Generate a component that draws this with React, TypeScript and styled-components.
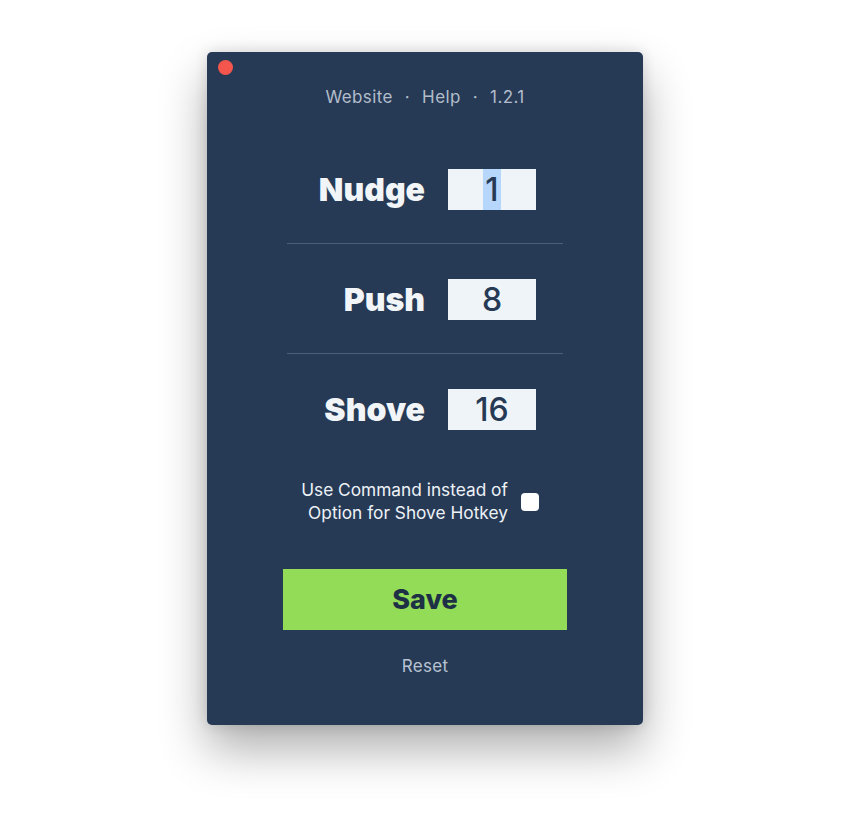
import React from 'react';
import styled, { createGlobalStyle } from 'styled-components';

const GlobalStyle = createGlobalStyle`
  html, body {
    margin: 0;
    padding: 0;
    background: #ffffff;
  }
  body {
    font-family: Inter, "Noto Sans", "Liberation Sans", sans-serif;
    -webkit-font-smoothing: antialiased;
  }
`;

const Page = styled.div`
  width: 849px;
  height: 827px;
  display: flex;
  justify-content: center;
  align-items: flex-start;
  padding-top: 52px;
  box-sizing: border-box;
`;

const Window = styled.div`
  width: 436px;
  height: 673px;
  margin-left: 1px;
  background: #263a56;
  border-radius: 5px;
  box-shadow: 0 24px 48px rgba(0, 0, 0, 0.32), 0 0 14px rgba(0, 0, 0, 0.14);
  display: flex;
  flex-direction: column;
  align-items: center;
`;

const TitleBar = styled.div`
  align-self: stretch;
  height: 30px;
  display: flex;
  align-items: center;
  padding-left: 11px;
`;

const CloseDot = styled.span`
  width: 15px;
  height: 15px;
  border-radius: 50%;
  background: #f4564d;
`;

const Links = styled.nav`
  margin-top: 5px;
  display: flex;
  gap: 12px;
  font-size: 17px;
  line-height: 20px;
  letter-spacing: 0.4px;
  color: #b3bdca;
`;

const LinkItem = styled.span``;

const Form = styled.div`
  margin-top: 62px;
  width: 276px;
  display: flex;
  flex-direction: column;
`;

const Field = styled.div`
  display: grid;
  grid-template-columns: 1fr 1fr;
  align-items: center;
  padding: 35px 0 33px;
  border-bottom: 1px solid #4b5f7a;

  &:first-child {
    padding-top: 0;
  }
  &:last-child {
    padding-bottom: 0;
    border-bottom: none;
  }
`;

const Label = styled.label`
  justify-self: end;
  font-size: 32px;
  line-height: 1;
  font-weight: 900;
  color: #f1f5f8;
`;

const NumberBox = styled.div`
  margin-left: 23px;
  width: 88px;
  height: 41px;
  background: #eef4f7;
  display: flex;
  justify-content: center;
  align-items: stretch;
  font-size: 32px;
  font-weight: 500;
  color: #263a56;
`;

const Value = styled.span<{ $selected?: boolean }>`
  display: flex;
  align-items: center;
  padding: 0 ${(p) => (p.$selected ? '2px' : '0')};
  background: ${(p) => (p.$selected ? '#b6d6fb' : 'transparent')};
`;

const OptionRow = styled.div`
  margin-top: 48px;
  display: flex;
  align-items: center;
  gap: 13px;
  padding-right: 10px;
`;

const OptionText = styled.span`
  text-align: right;
  font-size: 17.3px;
  line-height: 23px;
  color: #eef2f6;
`;

const Check = styled.span`
  width: 18px;
  height: 18px;
  border-radius: 4px;
  background: #ffffff;
  margin-top: 1px;
`;

const SaveButton = styled.button`
  margin-top: 45px;
  width: 284px;
  height: 61px;
  border: none;
  background: #93dc57;
  color: #1e3045;
  font-family: inherit;
  font-size: 27px;
  font-weight: 800;
  cursor: pointer;
`;

const ResetLink = styled.span`
  margin-top: 26px;
  font-size: 17px;
  line-height: 20px;
  letter-spacing: 0.3px;
  color: #b8c3d2;
`;

const fields = [
  { name: 'Nudge', value: '1', selected: true },
  { name: 'Push', value: '8' },
  { name: 'Shove', value: '16' },
];

export default function App() {
  return (
    <>
      <GlobalStyle />
      <Page>
        <Window>
          <TitleBar>
            <CloseDot />
          </TitleBar>
          <Links>
            <LinkItem>Website</LinkItem>
            <LinkItem>·</LinkItem>
            <LinkItem>Help</LinkItem>
            <LinkItem>·</LinkItem>
            <LinkItem>1.2.1</LinkItem>
          </Links>
          <Form>
            {fields.map((f) => (
              <Field key={f.name}>
                <Label>{f.name}</Label>
                <NumberBox>
                  <Value $selected={f.selected}>{f.value}</Value>
                </NumberBox>
              </Field>
            ))}
          </Form>
          <OptionRow>
            <OptionText>
              Use Command instead of
              <br />
              Option for Shove Hotkey
            </OptionText>
            <Check />
          </OptionRow>
          <SaveButton>Save</SaveButton>
          <ResetLink>Reset</ResetLink>
        </Window>
      </Page>
    </>
  );
}
